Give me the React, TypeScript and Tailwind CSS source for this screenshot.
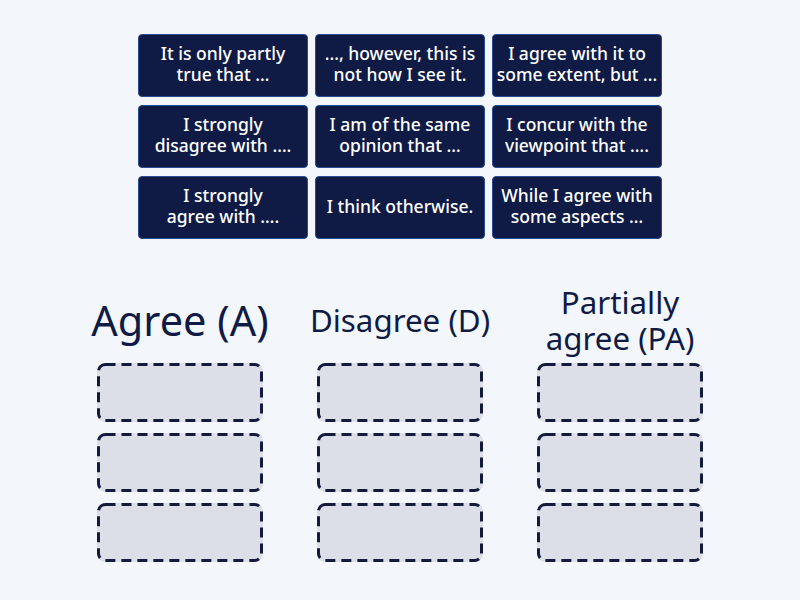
import React from 'react';

const cards = [
  ['It is only partly', 'true that …'],
  ['..., however, this is', 'not how I see it.'],
  ['I agree with it to', 'some extent, but …'],
  ['I strongly', 'disagree with ….'],
  ['I am of the same', 'opinion that …'],
  ['I concur with the', 'viewpoint that ….'],
  ['I strongly', 'agree with ….'],
  ['I think otherwise.'],
  ['While I agree with', 'some aspects …'],
];

const columns = [
  { lines: ['Agree (A)'], size: 'text-[41.5px]' },
  { lines: ['Disagree (D)'], size: 'text-[31.3px]' },
  { lines: ['Partially', 'agree (PA)'], size: 'text-[31.3px]' },
];

function DropZone() {
  return (
    <div className="relative w-[166px] h-[59px] bg-[#dcdfe8] rounded-[8px]">
      <svg className="absolute inset-0" width="166" height="59">
        <rect
          x="1.5"
          y="1.5"
          width="163"
          height="56"
          rx="7"
          fill="none"
          stroke="#141a3c"
          strokeWidth="3"
          strokeDasharray="10 6"
        />
      </svg>
    </div>
  );
}

export default function App() {
  return (
    <div
      className="w-[800px] h-[600px] bg-[#f3f6fb] flex flex-col items-center pt-[34px]"
      style={{ fontFamily: '"Noto Sans", sans-serif' }}
    >
      {/* Sentence cards */}
      <div className="grid grid-cols-3 gap-x-[7px] gap-y-[8px]">
        {cards.map((lines, i) => (
          <div
            key={i}
            className="w-[170px] h-[63px] pb-[3px] bg-[#0f1b45] border border-[#2a4a94] rounded-[4px] flex flex-col items-center justify-center text-center text-white text-[17.5px] leading-[21px] font-medium whitespace-nowrap"
          >
            {lines.map((l) => (
              <span key={l}>{l}</span>
            ))}
          </div>
        ))}
      </div>

      {/* Drop columns */}
      <div className="mt-[46px] flex">
        {columns.map((col) => (
          <div key={col.lines[0]} className="w-[220px] flex flex-col items-center">
            <div className="h-[74px] pb-[5px] flex flex-col items-center justify-center text-center whitespace-nowrap">
              {col.lines.map((l) => (
                <h2 key={l} className={`${col.size} leading-[36px] text-[#0f1b45]`}>{l}</h2>
              ))}
            </div>
            <div className="mt-[4px] flex flex-col gap-[11px]">
              {[0, 1, 2].map((n) => (
                <DropZone key={n} />
              ))}
            </div>
          </div>
        ))}
      </div>
    </div>
  );
}
